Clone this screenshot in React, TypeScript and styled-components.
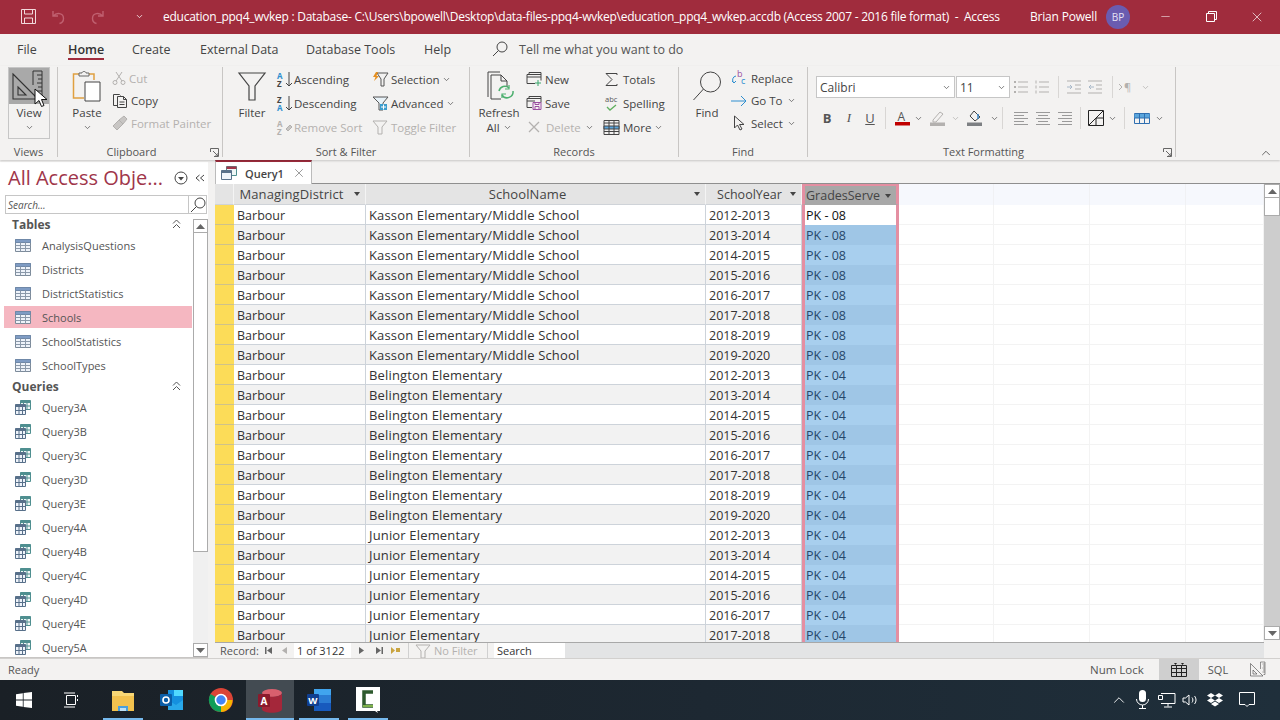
import React from "react";
import styled, { createGlobalStyle } from "styled-components";
import { ChevronDown, Minus, X, ChevronUp } from "lucide-react";

const FONT = `"Open Sans", "Noto Sans", sans-serif`;
const RED = "#a02c3d";

const GlobalStyle = createGlobalStyle`
  html, body { margin: 0; padding: 0; background: #f3f2f1; }
  * { box-sizing: border-box; }
  body { font-family: ${FONT}; }
`;

const Page = styled.div`
  width: 1280px;
  height: 720px;
  display: flex;
  flex-direction: column;
  overflow: hidden;
  background: #f3f2f1;
  color: #444;
`;

/* title bar */
const TitleBar = styled.div`
  height: 34px;
  flex-shrink: 0;
  background: ${RED};
  color: #fff;
  display: flex;
  align-items: center;
  font-size: 12px;
  padding: 0 0 1px 20px;
`;
const QuickAccess = styled.div`
  width: 143px;
  flex-shrink: 0;
  display: flex;
  align-items: center;
`;
const QuickSlot = styled.span<{ $w: number }>`
  width: ${(p) => p.$w}px;
  display: flex;
  align-items: center;
`;
const DocTitle = styled.div`
  width: 867px;
  flex-shrink: 0;
  white-space: pre;
  letter-spacing: -0.26px;
`;
const UserName = styled.div`
  width: 76px;
  flex-shrink: 0;
  white-space: nowrap;
  letter-spacing: -0.2px;
`;
const Avatar = styled.div`
  width: 24px;
  height: 24px;
  flex-shrink: 0;
  border-radius: 50%;
  background: #6a5cb0;
  color: #e6e2f5;
  font-size: 10px;
  display: flex;
  align-items: center;
  justify-content: center;
`;
const WindowButtons = styled.div`
  margin-left: 12px;
  display: flex;
`;
const WindowButton = styled.div`
  width: 46px;
  height: 33px;
  display: flex;
  align-items: center;
  justify-content: center;
`;

/* ribbon tabs */
const TabRow = styled.div`
  height: 32px;
  flex-shrink: 0;
  display: flex;
  align-items: flex-start;
  padding-left: 17px;
  font-size: 12.5px;
`;
const RibbonTab = styled.div<{ $w: number; $active?: boolean }>`
  width: ${(p) => p.$w}px;
  white-space: nowrap;
  color: ${(p) => (p.$active ? "#333" : "#444")};
  font-weight: ${(p) => (p.$active ? 600 : 400)};
  span {
    position: relative;
    display: inline-block;
    line-height: 31px;
  }
  span::after {
    content: "";
    display: ${(p) => (p.$active ? "block" : "none")};
    position: absolute;
    left: 0;
    right: 0;
    bottom: 5px;
    height: 2px;
    background: ${RED};
  }
`;
const TellMe = styled.div`
  height: 30px;
  display: flex;
  align-items: center;
  gap: 11px;
  color: #555;
`;

/* ribbon */
const Ribbon = styled.div`
  height: 94px;
  flex-shrink: 0;
  display: flex;
  position: relative;
  box-shadow: 0 1px 2px rgba(0, 0, 0, 0.18);
  z-index: 2;
  font-size: 11.5px;
`;
const Group = styled.div<{ $w: number }>`
  width: ${(p) => p.$w}px;
  height: 90px;
  flex-shrink: 0;
  margin-top: 1px;
  border-right: 1px solid #c8c6c4;
  display: flex;
  flex-direction: column;
  position: relative;
`;
const GroupBody = styled.div<{ $pl?: number }>`
  height: 78px;
  flex-shrink: 0;
  display: flex;
  padding-left: ${(p) => p.$pl ?? 0}px;
`;
const GroupLabel = styled.div<{ $pr?: number }>`
  text-align: center;
  font-size: 11px;
  line-height: 14px;
  color: #555;
  padding-right: ${(p) => p.$pr ?? 0}px;
`;
const Launcher = styled.span`
  position: absolute;
  right: 3px;
  bottom: 0;
  display: flex;
`;
const BigButton = styled.div<{ $w: number; $ml?: number }>`
  width: ${(p) => p.$w}px;
  margin-left: ${(p) => p.$ml ?? 0}px;
  display: flex;
  flex-direction: column;
  align-items: center;
  line-height: 15px;
  text-align: center;
  color: #444;
  flex-shrink: 0;
`;
const BigIcon = styled.div`
  height: 32px;
  margin-top: 3px;
  margin-bottom: 3px;
  display: flex;
  align-items: center;
  justify-content: center;
`;
const Chev = styled.span`
  height: 15px;
  display: inline-flex;
  align-items: center;
  justify-content: center;
  vertical-align: top;
`;
const ViewFrame = styled.div`
  width: 42px;
  height: 72px;
  margin-left: 8px;
  border: 1px solid #c6c6c6;
  display: flex;
  flex-direction: column;
  align-items: center;
  position: relative;
  line-height: 15px;
`;
const ViewHover = styled.div`
  width: 100%;
  height: 36px;
  background: #a9a9a9;
  display: flex;
  align-items: center;
  justify-content: center;
  margin-bottom: 1px;
`;
const Cursor = styled.span`
  position: absolute;
  left: 25px;
  top: 20px;
  display: flex;
`;
const Stack = styled.div<{ $w: number; $ml?: number; $h?: number }>`
  width: ${(p) => p.$w}px;
  margin-left: ${(p) => p.$ml ?? 0}px;
  display: grid;
  grid-auto-rows: ${(p) => p.$h ?? 24}px;
  align-content: start;
  flex-shrink: 0;
`;
const SmallRow = styled.div<{ $off?: boolean; $gap?: number }>`
  display: flex;
  align-items: center;
  gap: ${(p) => p.$gap ?? 3}px;
  color: ${(p) => (p.$off ? "#b3b1af" : "#444")};
  white-space: nowrap;
`;
const IconSlot = styled.span<{ $w: number }>`
  width: ${(p) => p.$w}px;
  display: flex;
  justify-content: center;
  flex-shrink: 0;
`;
const FormatBody = styled.div`
  height: 78px;
  flex-shrink: 0;
  padding: 9px 0 0 8px;
  display: flex;
  flex-direction: column;
  gap: 9px;
`;
const FormatRow = styled.div`
  height: 22px;
  display: flex;
  align-items: center;
`;
const Combo = styled.div<{ $w: number }>`
  width: ${(p) => p.$w}px;
  height: 22px;
  background: #fff;
  border: 1px solid #c6c6c6;
  margin-right: 1px;
  padding: 0 3px;
  display: flex;
  align-items: center;
  justify-content: space-between;
  font-size: 12px;
  color: #444;
`;
const Sep = styled.span<{ $ml: number; $mr: number }>`
  width: 1px;
  height: 22px;
  background: #d8d6d4;
  margin: 0 ${(p) => p.$mr}px 0 ${(p) => p.$ml}px;
`;
const FormatGlyph = styled.span<{ $w: number; $b?: boolean; $i?: boolean; $u?: boolean }>`
  width: ${(p) => p.$w}px;
  display: flex;
  align-items: center;
  justify-content: center;
  font-size: 13px;
  color: #555;
  font-family: ${(p) => (p.$i ? `"Liberation Serif", serif` : FONT)};
  font-weight: ${(p) => (p.$b ? 700 : 400)};
  font-style: ${(p) => (p.$i ? "italic" : "normal")};
  text-decoration: ${(p) => (p.$u ? "underline" : "none")};
`;
const Collapse = styled.span`
  position: absolute;
  right: 7px;
  bottom: 0;
  display: flex;
`;

/* workspace */
const Workspace = styled.div`
  flex: 1;
  min-height: 0;
  display: flex;
`;
const Nav = styled.div`
  width: 208px;
  margin-top: 2px;
  display: flex;
  flex-direction: column;
  background: #fff;
  flex-shrink: 0;
  border-bottom: 1px solid #c8c6c4;
`;
const NavHead = styled.div`
  height: 33px;
  flex-shrink: 0;
  display: flex;
  align-items: center;
  padding: 0 0 2px 8px;
  font-size: 20px;
  white-space: nowrap;
`;
const NavTitle = styled.div`
  width: 166px;
  color: #a0364a;
`;
const NavTools = styled.div`
  display: flex;
  align-items: center;
  gap: 7px;
`;
const NavSearch = styled.div`
  height: 19px;
  flex-shrink: 0;
  margin: 0 1px 0 5px;
  border: 1px solid #c6c6c6;
  display: flex;
  align-items: center;
  justify-content: space-between;
  font-size: 10px;
  font-style: italic;
  color: #555;
  padding-left: 2px;
`;
const SearchEnd = styled.span`
  width: 18px;
  height: 17px;
  border-left: 1px solid #c6c6c6;
  display: flex;
  align-items: center;
  justify-content: center;
`;
const NavBody = styled.div`
  flex: 1;
  min-height: 0;
  display: flex;
`;
const NavList = styled.div`
  flex: 1;
  min-width: 0;
  overflow: hidden;
  padding: 0 1px 0 4px;
`;
const NavSection = styled.div`
  display: flex;
  flex-direction: column;
  gap: 2px;
`;
const NavGroup = styled.div`
  height: 20px;
  margin-bottom: -2px;
  flex-shrink: 0;
  display: flex;
  align-items: center;
  justify-content: space-between;
  font-weight: 700;
  font-size: 12px;
  color: #555;
  padding: 0 11px 0 8px;
`;
const NavItem = styled.div<{ $selected?: boolean }>`
  height: 22px;
  flex-shrink: 0;
  display: flex;
  align-items: center;
  gap: 11px;
  padding-left: 11px;
  font-size: 11px;
  color: #555;
  background: ${(p) => (p.$selected ? "#f5b7c1" : "transparent")};
`;
const VScroll = styled.div<{ $w: number; $mt?: number }>`
  width: ${(p) => p.$w}px;
  margin-top: ${(p) => p.$mt ?? 0}px;
  flex-shrink: 0;
  display: flex;
  flex-direction: column;
  background: #f0f0f0;
`;
const ScrollBtn = styled.div`
  height: 14px;
  background: #fff;
  border: 1px solid #ababab;
  display: flex;
  align-items: center;
  justify-content: center;
  flex-shrink: 0;
`;
const ScrollThumb = styled.div<{ $h: number }>`
  height: ${(p) => p.$h}px;
  background: #fff;
  border: 1px solid #ababab;
  border-top: 0;
  flex-shrink: 0;
`;
const ScrollGap = styled.div<{ $dark?: boolean }>`
  flex: 1;
  background: ${(p) => (p.$dark ? "#cdcdcd" : "transparent")};
`;
const Doc = styled.div`
  flex: 1;
  min-width: 0;
  margin-left: 7px;
  display: flex;
  flex-direction: column;
`;
const DocTabs = styled.div`
  height: 24px;
  flex-shrink: 0;
  border-bottom: 1px solid #8f8f8f;
  display: flex;
`;
const DocTab = styled.div`
  width: 97px;
  height: 24px;
  background: #fff;
  border-top: 2px solid ${RED};
  border-left: 1px solid #bbb;
  border-right: 1px solid #bbb;
  display: flex;
  align-items: center;
  font-size: 11px;
  font-weight: 600;
  color: #444;
  padding-left: 5px;
  gap: 8px;
`;
const GridWrap = styled.div`
  flex: 1;
  min-height: 0;
  display: flex;
  background: #fff;
`;
const GridMain = styled.div`
  flex: 1;
  min-width: 0;
  display: flex;
  flex-direction: column;
`;
const Sheet = styled.div`
  flex: 1;
  min-height: 0;
  overflow: hidden;
`;
const COLUMNS = "19px 132px 340px 96px 97px 95px 96px 96px 78px";
const HeadRow = styled.div`
  height: 21px;
  display: grid;
  grid-template-columns: ${COLUMNS};
`;
const HeadCell = styled.div<{ $pr?: number; $wide?: boolean }>`
  display: flex;
  align-items: center;
  justify-content: center;
  position: relative;
  font-size: ${(p) => (p.$wide ? 13 : 12.5)}px;
  letter-spacing: ${(p) => (p.$wide ? 0.1 : 0)}px;
  color: #444;
  background: #e4e4e4;
  border-right: 1px solid #f4f4f4;
  border-bottom: 1px solid #cfd3d8;
  padding-right: ${(p) => p.$pr ?? 0}px;
  white-space: nowrap;
  overflow: hidden;
`;
const PickedHead = styled.div`
  display: flex;
  align-items: center;
  position: relative;
  font-size: 12.5px;
  color: #444;
  background: #a8a8a8;
  border: 3px solid #e48fa2;
  border-top-width: 2px;
  border-bottom: 1px solid #a8a8a8;
  padding-left: 1px;
  white-space: nowrap;
  overflow: hidden;
`;
const HeadArrow = styled.span`
  position: absolute;
  right: 5px;
  top: 8px;
  width: 0;
  height: 0;
  border-left: 3px solid transparent;
  border-right: 3px solid transparent;
  border-top: 4px solid #444;
`;
const GhostHead = styled.div`
  background: #f6f8fd;
  border-right: 1px solid #f0f1f4;
`;
const Row = styled.div`
  height: 20px;
  display: grid;
  grid-template-columns: ${COLUMNS};
`;
const RowMark = styled.div`
  background: #fcdc58;
  border-bottom: 1px solid #cfc28a;
`;
const Cell = styled.div<{ $alt: boolean; $wide?: boolean }>`
  font-size: ${(p) => (p.$wide ? 13 : 12.5)}px;
  letter-spacing: ${(p) => (p.$wide ? 0.16 : 0)}px;
  line-height: 19px;
  padding-top: 1px;
  color: #333;
  padding-left: 3px;
  background: ${(p) => (p.$alt ? "#f2f2f2" : "#fff")};
  border-right: 1px solid #cdd3da;
  border-bottom: 1px solid #cdd3da;
  white-space: nowrap;
  overflow: hidden;
`;
const PickCell = styled.div<{ $tone: "white" | "dark" | "light" }>`
  font-size: 12.5px;
  line-height: 19px;
  padding-top: 1px;
  padding-left: 1px;
  color: ${(p) => (p.$tone === "white" ? "#111" : "#26476a")};
  background: ${(p) =>
    p.$tone === "white" ? "#fff" : p.$tone === "dark" ? "#9fc6e6" : "#a8cfee"};
  border-left: 3px solid #e48fa2;
  border-right: 3px solid #e48fa2;
  white-space: nowrap;
  overflow: hidden;
`;
const GhostCell = styled.div`
  border-right: 1px solid #f3f3f3;
  border-bottom: 1px solid #f3f3f3;
`;
const RecordBar = styled.div`
  height: 16px;
  flex-shrink: 0;
  display: flex;
  align-items: center;
  border-top: 1px solid #a8a8a8;
  background: #f3f2f1;
  font-size: 11px;
  color: #555;
`;
const RecordLabel = styled.span`
  margin-left: 5px;
  width: 41px;
  flex-shrink: 0;
  line-height: 16px;
`;
const NavGlyph = styled.span<{ $w: number }>`
  width: ${(p) => p.$w}px;
  display: flex;
  justify-content: center;
  flex-shrink: 0;
`;
const RecordInput = styled.div<{ $w: number }>`
  width: ${(p) => p.$w}px;
  height: 15px;
  background: #fff;
  padding-left: 3px;
  line-height: 16px;
  color: #333;
  flex-shrink: 0;
`;
const BarSep = styled.span<{ $ml: number; $mr: number }>`
  width: 1px;
  height: 15px;
  background: #d0d0d0;
  margin: 0 ${(p) => p.$mr}px 0 ${(p) => p.$ml}px;
  flex-shrink: 0;
`;
const NoFilter = styled.span`
  display: flex;
  align-items: center;
  gap: 3px;
  color: #b3b1af;
  width: 72px;
  flex-shrink: 0;
  line-height: 16px;
`;
const HScroll = styled.div`
  flex: 1;
  height: 15px;
  background: #e3e4e5;
`;
const Corner = styled.div`
  height: 18px;
  background: #f3f2f1;
  flex-shrink: 0;
`;

/* status */
const StatusBar = styled.div`
  height: 22px;
  flex-shrink: 0;
  border-top: 1px solid #d2d0ce;
  display: flex;
  align-items: center;
  font-size: 11px;
  color: #555;
  padding-left: 8px;
`;
const StatusText = styled.span`
  flex: 1;
`;
const NumLock = styled.span`
  font-size: 11.5px;
  width: 69px;
`;
const ViewToggle = styled.span<{ $w: number; $on?: boolean }>`
  width: ${(p) => p.$w}px;
  height: 21px;
  display: flex;
  align-items: center;
  justify-content: center;
  background: ${(p) => (p.$on ? "#cfcfcf" : "transparent")};
`;

/* taskbar */
const Taskbar = styled.div`
  height: 40px;
  flex-shrink: 0;
  background: linear-gradient(90deg, #1a2026 0%, #1d2832 55%, #1f2f3b 100%);
  display: flex;
  align-items: center;
`;
const TaskIcon = styled.div<{ $w: number; $open?: boolean; $active?: boolean; $mr?: number }>`
  width: ${(p) => p.$w}px;
  margin-right: ${(p) => p.$mr ?? 0}px;
  height: 40px;
  display: flex;
  align-items: center;
  justify-content: center;
  position: relative;
  flex-shrink: 0;
  background: ${(p) => (p.$active ? "#434b52" : "transparent")};
  &::after {
    content: "";
    display: ${(p) => (p.$open ? "block" : "none")};
    position: absolute;
    left: 0;
    right: 0;
    bottom: 0;
    height: 2px;
    background: #76b9ed;
  }
`;
const Tray = styled.div`
  margin-left: auto;
  display: flex;
  align-items: center;
  color: #fff;
`;
const TraySlot = styled.span<{ $w: number }>`
  width: ${(p) => p.$w}px;
  display: flex;
  justify-content: center;
`;

type SvgProps = { w: number; h?: number; children: React.ReactNode; vb?: string };
const Svg = ({ w, h, children, vb }: SvgProps) => (
  <svg
    width={w}
    height={h ?? w}
    viewBox={vb ?? `0 0 ${w} ${h ?? w}`}
    fill="none"
    stroke="#555"
    strokeWidth="1"
    style={{ display: "block", flexShrink: 0, overflow: "visible" }}
  >
    {children}
  </svg>
);

const SmallChev = ({ color = "#555", size = 9 }: { color?: string; size?: number }) => (
  <Chev>
    <ChevronDown size={size} color={color} strokeWidth={2} />
  </Chev>
);

const SaveIcon = () => (
  <Svg w={17}>
    <path d="M1.5 1.5h14v14h-14z" stroke="#f2d9dc" />
    <path d="M4.5 1.5v4.5h8v-4.5M4.5 15.5v-5.5h8v5.5" stroke="#f2d9dc" />
  </Svg>
);
const UndoIcon = ({ flip }: { flip?: boolean }) => (
  <Svg w={16}>
    <g transform={flip ? "translate(16,0) scale(-1,1)" : undefined}>
      <path d="M3 2v5h5M3.5 7c3-4 10-3 10 2.5 0 3-2 4.5-4 5" stroke="#c06070" strokeWidth="1.4" />
    </g>
  </Svg>
);
const DesignIcon = ({ s = 34 }: { s?: number }) => (
  <Svg w={s} vb="0 0 34 34">
    <path d="M1 5L26 30H1Z M6 18L14 26H6Z" stroke="#333" strokeWidth="1.1" />
    <path d="M21 2h9v25h-3M21 2v14M25 6h5M26 10h4M25 14h5M26 18h4M25 22h5" stroke="#333" strokeWidth="1" />
  </Svg>
);
const PasteIcon = () => (
  <Svg w={30} h={32}>
    <path d="M8 4H1.5v24H12" stroke="#e0a040" strokeWidth="1.5" />
    <path d="M16 4h6v6" stroke="#e0a040" strokeWidth="1.5" />
    <path d="M7 6V3h3c0-2 4-2 4 0h3v3z" fill="#f3f2f1" stroke="#666" />
    <path d="M13 12h15v19H13z" fill="#fff" stroke="#444" />
  </Svg>
);
const CutIcon = () => (
  <Svg w={14}>
    <path d="M4 1l6 9M10 1L4 10" stroke="#b3b1af" />
    <circle cx="3" cy="11.5" r="2" stroke="#b3b1af" />
    <circle cx="11" cy="11.5" r="2" stroke="#b3b1af" />
  </Svg>
);
const CopyIcon = () => (
  <Svg w={16}>
    <path d="M5 12.5H1.5v-11h6l1 1" stroke="#444" />
    <path d="M5.5 3.5h6l3 3v8h-9zM11.5 3.5v3h3M7.5 9h5M7.5 11.5h5" stroke="#444" />
  </Svg>
);
const BrushIcon = () => (
  <Svg w={16}>
    <path d="M1 11l6-6 4 4-6 6zM7 5l5-4 3 3-4 5" fill="#c8c6c4" stroke="#b3b1af" />
  </Svg>
);
const FunnelBig = () => (
  <Svg w={28} h={30}>
    <path d="M1 2h26L17 15v14h-6V15z" stroke="#444" strokeWidth="1.2" />
  </Svg>
);
const SortIcon = ({ down, off }: { down?: boolean; off?: boolean }) => {
  const top = off ? "#b3b1af" : down ? "#444" : "#2f8fd0";
  const bottom = off ? "#b3b1af" : down ? "#2f8fd0" : "#444";
  return (
    <Svg w={17}>
      <text x="1" y="7.5" fontSize="8" fontWeight="700" fill={top} stroke="none" fontFamily={FONT}>
        {down ? "Z" : "A"}
      </text>
      <text x="1" y="15.5" fontSize="8" fontWeight="700" fill={bottom} stroke="none" fontFamily={FONT}>
        {down ? "A" : "Z"}
      </text>
      {off ? (
        <path d="M10 10l4-4 2 2-4 4z" fill="#c8c6c4" stroke="#b3b1af" />
      ) : (
        <path d="M13 1v14M10 12l3 3 3-3" stroke="#444" />
      )}
    </Svg>
  );
};
const SelectionIcon = () => (
  <Svg w={17}>
    <path d="M5 2h11l-4 6v7h-3V8z" stroke="#555" />
    <path d="M4 1L1 6h2.5L2 10l5-5H4.5L6 1z" fill="#e69020" stroke="none" />
  </Svg>
);
const AdvancedIcon = () => (
  <Svg w={17}>
    <path d="M1 2h15l-5 6v7H7V8z" stroke="#555" fill="#e8f2f8" />
    <path d="M8 9h7v6H8z" fill="#3c9ccc" stroke="none" />
    <path d="M9 12h5M11.5 9.5v5" stroke="#fff" />
  </Svg>
);
const ToggleIcon = () => (
  <Svg w={16}>
    <path d="M1 2h14l-5 6v7H6V8z" stroke="#b3b1af" />
  </Svg>
);
const RefreshIcon = () => (
  <Svg w={30} h={32}>
    <path d="M4 27V2M7 29V5h10l6 6v6M7 29h10M17 5v6h6" stroke="#444" />
    <path d="M4 2h12" stroke="#444" />
    <path d="M15 21a6 6 0 0 1 10-3M29 21a6 6 0 0 1-11 4" stroke="#4caf6e" strokeWidth="1.5" />
    <path d="M25 15v4h-4M18 28v-4h4" stroke="#4caf6e" strokeWidth="1.2" />
  </Svg>
);
const NewIcon = () => (
  <Svg w={16}>
    <path d="M3 1.5h12v8M1 3.5v9h8M3 1.5v2M1 3.5h14M1 6h14" stroke="#444" />
    <path d="M12 9v6M9 12h6" stroke="#3aa76d" />
  </Svg>
);
const SaveRecIcon = () => (
  <Svg w={16}>
    <path d="M3 1.5h12v6M1 3.5v9h5M3 1.5v2M1 3.5h14M1 6h8" stroke="#444" />
    <path d="M7 7.5h8v7H7zM9 7.5v2h4v-2M9 14.5v-3h4v3" stroke="#9a4fa0" />
  </Svg>
);
const DeleteIcon = () => (
  <Svg w={14}>
    <path d="M2 2l10 10M12 2L2 12" stroke="#b3b1af" strokeWidth="1.3" />
  </Svg>
);
const SumIcon = () => (
  <Svg w={15}>
    <path d="M13 3V1.5H2l6 6-6 6h11V12" stroke="#444" />
  </Svg>
);
const SpellIcon = () => (
  <Svg w={16}>
    <text x="1" y="7" fontSize="7.5" fill="#555" stroke="none" fontFamily={FONT}>
      abc
    </text>
    <path d="M3 12l3 3 6-5" stroke="#60b060" strokeWidth="1.3" />
  </Svg>
);
const MoreIcon = () => (
  <Svg w={17}>
    <path d="M1 1.5h15v14H1z" stroke="#444" />
    <path d="M1 7h15v3H1z" fill="#5aa5dc" stroke="#444" />
    <path d="M1 4h15M1 12.5h15M6 1.5v14M11 1.5v14" stroke="#444" />
  </Svg>
);
const FindIcon = () => (
  <Svg w={30}>
    <circle cx="18.5" cy="11" r="10" stroke="#444" />
    <path d="M11.5 18L1.5 29" stroke="#444" />
  </Svg>
);
const ReplaceIcon = () => (
  <Svg w={16}>
    <text x="6" y="7" fontSize="9" fill="#9a4fa0" stroke="none" fontFamily={FONT}>
      b
    </text>
    <text x="10" y="14" fontSize="9" fill="#2f8fd0" stroke="none" fontFamily={FONT}>
      c
    </text>
    <path d="M5 6a4 4 0 0 0-2 7M1 11l2 2 2-2" stroke="#2f8fd0" />
  </Svg>
);
const GoToIcon = () => (
  <Svg w={16}>
    <path d="M0 8h15M10 3l5 5-5 5" stroke="#2f8fd0" />
  </Svg>
);
const SelectIcon = () => (
  <Svg w={13} h={16}>
    <path d="M1.5 1v12l3-3 2.5 5 2-1-2.5-4.5H11z" stroke="#444" />
  </Svg>
);
const LauncherIcon = () => (
  <Svg w={9}>
    <path d="M0.5 4V0.5H8.5V8.5H4M3 3l5 5M8 5v3H5" stroke="#666" />
  </Svg>
);
const BulletsIcon = ({ num }: { num?: boolean }) => (
  <Svg w={16}>
    <path d="M5 3h10M5 8h10M5 13h10" stroke="#b3b1af" />
    {!num && <path d="M1 2h2v2H1zM1 7h2v2H1zM1 12h2v2H1z" fill="#b3b1af" stroke="none" />}
    {num && <path d="M2 1.5v3M2 6.5v3M2 11.5v3" stroke="#b3b1af" />}
  </Svg>
);
const IndentIcon = ({ back }: { back?: boolean }) => (
  <Svg w={16}>
    <path d="M1 2h14M9 6h6M9 10h6M1 14h14" stroke="#b3b1af" />
    <path d={back ? "M7 8H2M4 6L2 8l2 2" : "M1 8h5M4 6l2 2-2 2"} stroke="#a8b8c8" />
  </Svg>
);
const ParaIcon = () => (
  <Svg w={16}>
    <path d="M1 5l3 3-3 3" stroke="#b3b1af" />
    <text x="6" y="12" fontSize="11" fill="#b3b1af" stroke="none" fontFamily={FONT}>
      ¶
    </text>
  </Svg>
);
const FontColorIcon = () => (
  <Svg w={17}>
    <text x="3.5" y="11" fontSize="12" fill="#555" stroke="none" fontFamily={FONT}>
      A
    </text>
    <path d="M1 12h15v3.5H1z" fill="#c00000" stroke="none" />
  </Svg>
);
const HighlightIcon = () => (
  <Svg w={17}>
    <path d="M4 10l7-8 3 2-7 8H4z" stroke="#b3b1af" />
    <path d="M1 12.5h15V16H1z" fill="#b3b1af" stroke="none" />
  </Svg>
);
const FillIcon = () => (
  <Svg w={17}>
    <path d="M8 1l6 6-5 4-5-5z" stroke="#444" />
    <path d="M12 4v5" stroke="#2f7fc0" strokeWidth="1.4" />
    <path d="M1 12.5h15V16H1z" fill="#7d8083" stroke="none" />
  </Svg>
);
const AlignIcon = ({ kind }: { kind: "l" | "c" | "r" }) => {
  const short =
    kind === "l" ? "M1 5.5h10M1 11.5h10" : kind === "c" ? "M3 5.5h10M3 11.5h10" : "M5 5.5h10M5 11.5h10";
  return (
    <Svg w={16}>
      <path d={`M1 2.5h14M1 8.5h14M1 14.5h14 ${short}`} stroke="#9a9a9a" />
    </Svg>
  );
};
const GridlineIcon = () => (
  <Svg w={16}>
    <path d="M.5.5h15v15H.5zM15 1L1 15M8 8v7M8 8h7" stroke="#222" />
  </Svg>
);
const ColorTable = () => (
  <Svg w={16} h={11}>
    <path d="M.5.5h15v10H.5z" stroke="#2f6fb0" />
    <path d="M.5 1h15v4H.5z" fill="#5aa5dc" stroke="none" />
    <path d="M.5 5h15M5.5.5v10M10.5.5v10" stroke="#2f6fb0" />
  </Svg>
);
const TableIcon = () => (
  <Svg w={16} h={13}>
    <path d="M.5.5h15v12H.5z" stroke="#7d8b9a" fill="#eef3fa" />
    <path d="M.5.5h15v3H.5z" fill="#7f9cc4" stroke="#6f88a8" />
    <path d="M.5 6.500h15M.5 9.500h15M5.500 3.500v9M10.500 3.500v9" stroke="#8b99aa" />
  </Svg>
);
const QueryIcon = () => (
  <Svg w={16} h={15}>
    <path d="M5.5.5h10v9h-10z" fill="#eef6f6" stroke="#4f8f90" />
    <path d="M5.5.5h10v2.500h-10z" fill="#4f8f90" stroke="none" />
    <path d="M8.500 3v7M12 3v7M5.500 6h10" stroke="#4f8f90" />
    <path d="M.5 4.500h10v10H.5z" fill="#eef3fa" stroke="#58708a" />
    <path d="M.5 4.500h10V7H.5z" fill="#58708a" stroke="none" />
    <path d="M.5 10.500h10M4 7v7M7.500 7v7" stroke="#58708a" />
  </Svg>
);
const MagIcon = () => (
  <Svg w={16}>
    <circle cx="10" cy="6" r="5" stroke="#444" />
    <path d="M6.500 9.500L1 15" stroke="#444" />
  </Svg>
);
const Tri = ({ up, color = "#666" }: { up?: boolean; color?: string }) => (
  <Svg w={9} h={5}>
    <path d={up ? "M0 5L4.500 0 9 5z" : "M0 0L4.500 5 9 0z"} fill={color} stroke="none" />
  </Svg>
);
const DoubleUp = () => (
  <Svg w={9} h={10}>
    <path d="M1 4.500L4.500 1 8 4.500M1 9L4.500 5.500 8 9" stroke="#555" />
  </Svg>
);
const CircleDown = () => (
  <Svg w={14}>
    <circle cx="7" cy="7" r="6" stroke="#444" />
    <path d="M4 6h6L7 9.500z" fill="#444" stroke="none" />
  </Svg>
);
const DoubleLeft = () => (
  <Svg w={10}>
    <path d="M4.500 2L1 5l3.500 3M9 2L5.500 5 9 8" stroke="#444" />
  </Svg>
);
const Mouse = () => (
  <Svg w={14} h={21}>
    <path d="M1 1v15l4-3.500 2.500 6 2.500-1-2.500-6H13z" fill="#fff" stroke="#111" />
  </Svg>
);
const RecNav = ({ d, color = "#666" }: { d: string; color?: string }) => (
  <Svg w={9}>
    <path d={d} fill={color} stroke="none" />
  </Svg>
);
const WinLogo = () => (
  <Svg w={16}>
    <path d="M0 2.200L6.800 1.200V7.600H0zM7.600 1.100L16 0V7.600H7.600zM0 8.400H6.800V14.800L0 13.800zM7.600 8.400H16V16L7.600 14.900z" fill="#fff" stroke="none" />
  </Svg>
);
const TaskView = () => (
  <Svg w={16}>
    <path d="M3.500 3.500h9v9h-9zM1 1h11M1 15h11M14.500 3v2M14.500 7v2" stroke="#fff" />
  </Svg>
);
const Explorer = () => (
  <Svg w={22} h={21}>
    <path d="M0 1h10l2 2h10v18H0z" fill="#f8d775" stroke="none" />
    <path d="M0 6h22v15H0z" fill="#f2c14e" stroke="none" />
    <path d="M6 21v-5h10v5z" fill="#4a9fdc" stroke="none" />
    <path d="M8 21v-3h6v3z" fill="#bfe0f5" stroke="none" />
  </Svg>
);
const Outlook = () => (
  <Svg w={24} h={24}>
    <path d="M8 2h15v20H8z" fill="#1490df" stroke="none" />
    <path d="M8 12l8 5 7-5v10H8z" fill="#28a8ea" stroke="none" />
    <path d="M14 2h9v6h-9z" fill="#50d9ff" stroke="none" />
    <rect x="0" y="6" width="12" height="12" rx="1" fill="#0a5ea8" stroke="none" />
    <circle cx="6" cy="12" r="3" stroke="#fff" strokeWidth="1.6" />
  </Svg>
);
const Chrome = () => (
  <Svg w={24}>
    <circle cx="12" cy="12" r="12" fill="#db4437" stroke="none" />
    <path d="M12 12L1.500 6A12 12 0 0 0 12 24z" fill="#0f9d58" stroke="none" />
    <path d="M12 12h11.500A12 12 0 0 1 12 24z" fill="#f4b400" stroke="none" />
    <circle cx="12" cy="12" r="5.500" fill="#4285f4" stroke="#fff" strokeWidth="1.6" />
  </Svg>
);
const AccessApp = () => (
  <Svg w={24} h={25}>
    <ellipse cx="14" cy="5" rx="10" ry="4" fill="#d8606e" stroke="none" />
    <path d="M4 5v16c0 5 20 5 20 0V5c0 5-20 5-20 0z" fill="#a4273a" stroke="none" />
    <rect x="0" y="6" width="12" height="13" rx="1" fill="#8b1a2c" stroke="none" />
    <text x="2.400" y="16.500" fontSize="10" fontWeight="700" fill="#fff" stroke="none" fontFamily={FONT}>
      A
    </text>
  </Svg>
);
const WordApp = () => (
  <Svg w={24}>
    <path d="M7 1h17v22H7z" fill="#2b7cd3" stroke="none" />
    <path d="M7 1h17v6H7z" fill="#41a5ee" stroke="none" />
    <path d="M7 15h17v8H7z" fill="#185abd" stroke="none" />
    <rect x="0" y="6" width="12" height="12" rx="1" fill="#103f91" stroke="none" />
    <text x="1.200" y="15.500" fontSize="9.500" fontWeight="700" fill="#fff" stroke="none" fontFamily={FONT}>
      W
    </text>
  </Svg>
);
const CamtasiaApp = () => (
  <Svg w={24} h={26}>
    <path d="M0 0h24v24h-3l1 2-3-2H0z" fill="#fff" stroke="none" />
    <path d="M17 5H8v14h9" stroke="#2e5a2e" strokeWidth="3.500" />
    <path d="M7 19h10" stroke="#7fb24a" strokeWidth="2" />
  </Svg>
);
const TrayMic = () => (
  <Svg w={14} h={20}>
    <rect x="4" y="0" width="7" height="12" rx="3.500" fill="#fff" stroke="none" />
    <path d="M1.500 9a6 6 0 0 0 12 0M7.500 15v3M4 18.500h7" stroke="#fff" />
  </Svg>
);
const TrayNet = () => (
  <Svg w={18} h={15}>
    <path d="M3 .5h14v10H3M10 10.500v3M6 14h8M.5 2.500h4v4h-4z" stroke="#fff" />
  </Svg>
);
const TrayVolume = () => (
  <Svg w={16} h={14}>
    <path d="M1 5v4h2.500L7 12V2L3.500 5zM10 4.500c1.200 1.500 1.200 3.500 0 5M12.500 3c2 2.500 2 5.500 0 8" stroke="#fff" />
  </Svg>
);
const Dropbox = () => (
  <Svg w={16} h={14}>
    <path d="M4 0l4 2.500-4 2.500-4-2.500zM12 0l4 2.500-4 2.500-4-2.500zM4 5l4 2.500-4 2.500-4-2.500zM12 5l4 2.500-4 2.500-4-2.500zM4 11l4-2.500 4 2.500-4 2.500z" fill="#fff" stroke="none" />
  </Svg>
);
const Bubble = () => (
  <Svg w={16} h={16}>
    <path d="M.5.5h15v12H10l-2 2-2-2H.5z" stroke="#fff" />
  </Svg>
);
const DocTabIcon = () => (
  <Svg w={16} h={15}>
    <path d="M5.500.5h10v9h-10z" fill="#eef6f6" stroke="#4f8f90" />
    <path d="M5.500.5h10v2.500h-10z" fill="#a0364a" stroke="none" />
    <path d="M.5 4.500h10v9H.5z" fill="#eef3fa" stroke="#58708a" />
    <path d="M.5 4.500h10V7H.5z" fill="#58708a" stroke="none" />
  </Svg>
);
const SheetIcon = () => (
  <Svg w={16} h={15}>
    <path d="M.5 3.500h15v11H.5zM.5 6.500h15M.5 10.500h15M5.500 3.500v11M10.500 3.500v11" stroke="#222" />
    <path d="M3 1h3L4.500 3zM10 1h3l-1.500 2z" fill="#222" stroke="none" />
  </Svg>
);

const tables = ["AnalysisQuestions", "Districts", "DistrictStatistics", "Schools", "SchoolStatistics", "SchoolTypes"];
const queries = ["Query3A", "Query3B", "Query3C", "Query3D", "Query3E", "Query4A", "Query4B", "Query4C", "Query4D", "Query4E", "Query5A"];
const years = ["2012-2013", "2013-2014", "2014-2015", "2015-2016", "2016-2017", "2017-2018", "2018-2019", "2019-2020"];

const rows = [
  ...years.map((y) => ({ school: "Kasson Elementary/Middle School", year: y, grades: "PK - 08" })),
  ...years.map((y) => ({ school: "Belington Elementary", year: y, grades: "PK - 04" })),
  ...years.slice(0, 6).map((y) => ({ school: "Junior Elementary", year: y, grades: "PK - 04" })),
];

export default function App() {
  return (
    <Page>
      <GlobalStyle />
      <TitleBar>
        <QuickAccess>
          <QuickSlot $w={30}><SaveIcon /></QuickSlot>
          <QuickSlot $w={40}><UndoIcon /></QuickSlot>
          <QuickSlot $w={45}><UndoIcon flip /></QuickSlot>
          <QuickSlot $w={20}><SmallChev color="#fff" /></QuickSlot>
        </QuickAccess>
        <DocTitle>education_ppq4_wvkep : Database- C:\Users\bpowell\Desktop\data-files-ppq4-wvkep\education_ppq4_wvkep.accdb (Access 2007 - 2016 file format)  -  Access</DocTitle>
        <UserName>Brian Powell</UserName>
        <Avatar>BP</Avatar>
        <WindowButtons>
          <WindowButton><Minus size={13} color="#fff" strokeWidth={1} /></WindowButton>
          <WindowButton>
            <Svg w={11}>
              <path d="M.5 2.500h8v8h-8zM2.500 2.500v-2h8v8h-2" stroke="#fff" />
            </Svg>
          </WindowButton>
          <WindowButton><X size={16} color="#fff" strokeWidth={1} /></WindowButton>
        </WindowButtons>
      </TitleBar>

      <TabRow>
        <RibbonTab $w={51}><span>File</span></RibbonTab>
        <RibbonTab $w={64} $active><span>Home</span></RibbonTab>
        <RibbonTab $w={68}><span>Create</span></RibbonTab>
        <RibbonTab $w={106}><span>External Data</span></RibbonTab>
        <RibbonTab $w={118}><span>Database Tools</span></RibbonTab>
        <RibbonTab $w={68}><span>Help</span></RibbonTab>
        <TellMe>
          <MagIcon />
          <span>Tell me what you want to do</span>
        </TellMe>
      </TabRow>

      <Ribbon>
        <Group $w={58}>
          <GroupBody>
            <ViewFrame>
              <ViewHover><DesignIcon /></ViewHover>
              <span>View</span>
              <SmallChev />
              <Cursor><Mouse /></Cursor>
            </ViewFrame>
          </GroupBody>
          <GroupLabel>Views</GroupLabel>
        </Group>

        <Group $w={165}>
          <GroupBody $pl={15}>
            <BigButton $w={28}>
              <BigIcon><PasteIcon /></BigIcon>
              <span>Paste</span>
              <SmallChev />
            </BigButton>
            <Stack $w={110} $ml={11} $h={22.5}>
              <SmallRow $off><IconSlot $w={14}><CutIcon /></IconSlot>Cut</SmallRow>
              <SmallRow><IconSlot $w={16}><CopyIcon /></IconSlot>Copy</SmallRow>
              <SmallRow $off><IconSlot $w={16}><BrushIcon /></IconSlot>Format Painter</SmallRow>
            </Stack>
          </GroupBody>
          <GroupLabel $pr={17}>Clipboard</GroupLabel>
          <Launcher><LauncherIcon /></Launcher>
        </Group>

        <Group $w={247}>
          <GroupBody $pl={14}>
            <BigButton $w={30}>
              <BigIcon><FunnelBig /></BigIcon>
              <span>Filter</span>
            </BigButton>
            <Stack $w={96} $ml={8}>
              <SmallRow $gap={1}><IconSlot $w={18}><SortIcon /></IconSlot>Ascending</SmallRow>
              <SmallRow $gap={1}><IconSlot $w={18}><SortIcon down /></IconSlot>Descending</SmallRow>
              <SmallRow $off $gap={1}><IconSlot $w={18}><SortIcon off /></IconSlot>Remove Sort</SmallRow>
            </Stack>
            <Stack $w={90}>
              <SmallRow $gap={2}><IconSlot $w={18}><SelectionIcon /></IconSlot>Selection <SmallChev /></SmallRow>
              <SmallRow $gap={2}><IconSlot $w={18}><AdvancedIcon /></IconSlot>Advanced <SmallChev /></SmallRow>
              <SmallRow $off $gap={2}><IconSlot $w={18}><ToggleIcon /></IconSlot>Toggle Filter</SmallRow>
            </Stack>
          </GroupBody>
          <GroupLabel>Sort &amp; Filter</GroupLabel>
        </Group>

        <Group $w={209}>
          <GroupBody $pl={9}>
            <BigButton $w={40}>
              <BigIcon><RefreshIcon /></BigIcon>
              <span>Refresh</span>
              <span>All <SmallChev /></span>
            </BigButton>
            <Stack $w={77} $ml={7}>
              <SmallRow><IconSlot $w={16}><NewIcon /></IconSlot>New</SmallRow>
              <SmallRow><IconSlot $w={16}><SaveRecIcon /></IconSlot>Save</SmallRow>
              <SmallRow $off $gap={4}><IconSlot $w={16}><DeleteIcon /></IconSlot>Delete<SmallChev /></SmallRow>
            </Stack>
            <Stack $w={70}>
              <SmallRow><IconSlot $w={17}><SumIcon /></IconSlot>Totals</SmallRow>
              <SmallRow><IconSlot $w={17}><SpellIcon /></IconSlot>Spelling</SmallRow>
              <SmallRow><IconSlot $w={17}><MoreIcon /></IconSlot>More <SmallChev /></SmallRow>
            </Stack>
          </GroupBody>
          <GroupLabel>Records</GroupLabel>
        </Group>

        <Group $w={129}>
          <GroupBody $pl={13}>
            <BigButton $w={30}>
              <BigIcon><FindIcon /></BigIcon>
              <span>Find</span>
            </BigButton>
            <Stack $w={80} $ml={9} $h={22.5}>
              <SmallRow $gap={4}><IconSlot $w={16}><ReplaceIcon /></IconSlot>Replace</SmallRow>
              <SmallRow $gap={4}><IconSlot $w={16}><GoToIcon /></IconSlot>Go To <SmallChev /></SmallRow>
              <SmallRow $gap={4}><IconSlot $w={16}><SelectIcon /></IconSlot>Select <SmallChev /></SmallRow>
            </Stack>
          </GroupBody>
          <GroupLabel>Find</GroupLabel>
        </Group>

        <Group $w={368}>
          <FormatBody>
            <FormatRow>
              <Combo $w={139}>Calibri <SmallChev /></Combo>
              <Combo $w={54}>11 <SmallChev /></Combo>
              <IconSlot $w={20}><BulletsIcon /></IconSlot>
              <IconSlot $w={22}><BulletsIcon num /></IconSlot>
              <Sep $ml={5} $mr={5} />
              <IconSlot $w={20}><IndentIcon /></IconSlot>
              <IconSlot $w={22}><IndentIcon back /></IconSlot>
              <Sep $ml={6} $mr={3} />
              <IconSlot $w={20}><ParaIcon /></IconSlot>
              <IconSlot $w={18}><SmallChev color="#b3b1af" /></IconSlot>
            </FormatRow>
            <FormatRow>
              <FormatGlyph $w={22} $b>B</FormatGlyph>
              <FormatGlyph $w={22} $i>I</FormatGlyph>
              <FormatGlyph $w={20} $u>U</FormatGlyph>
              <Sep $ml={5} $mr={7} />
              <IconSlot $w={18}><FontColorIcon /></IconSlot>
              <IconSlot $w={14}><SmallChev /></IconSlot>
              <IconSlot $w={24}><HighlightIcon /></IconSlot>
              <IconSlot $w={12}><SmallChev color="#b3b1af" /></IconSlot>
              <IconSlot $w={27}><FillIcon /></IconSlot>
              <IconSlot $w={12}><SmallChev /></IconSlot>
              <Sep $ml={2} $mr={7} />
              <IconSlot $w={22}><AlignIcon kind="l" /></IconSlot>
              <IconSlot $w={22}><AlignIcon kind="c" /></IconSlot>
              <IconSlot $w={22}><AlignIcon kind="r" /></IconSlot>
              <Sep $ml={4} $mr={6} />
              <IconSlot $w={18}><GridlineIcon /></IconSlot>
              <IconSlot $w={14}><SmallChev /></IconSlot>
              <Sep $ml={5} $mr={8} />
              <IconSlot $w={18}><ColorTable /></IconSlot>
              <IconSlot $w={16}><SmallChev /></IconSlot>
            </FormatRow>
          </FormatBody>
          <GroupLabel $pr={16}>Text Formatting</GroupLabel>
          <Launcher><LauncherIcon /></Launcher>
        </Group>

        <Collapse><ChevronUp size={14} color="#555" strokeWidth={1.5} /></Collapse>
      </Ribbon>

      <Workspace>
        <Nav>
          <NavHead>
            <NavTitle>All Access Obje...</NavTitle>
            <NavTools>
              <CircleDown />
              <DoubleLeft />
            </NavTools>
          </NavHead>
          <NavSearch>
            Search...
            <SearchEnd><MagIcon /></SearchEnd>
          </NavSearch>
          <NavBody>
            <NavList>
              <NavSection>
                <NavGroup>Tables <DoubleUp /></NavGroup>
                {tables.map((t) => (
                  <NavItem key={t} $selected={t === "Schools"}>
                    <TableIcon />
                    {t}
                  </NavItem>
                ))}
              </NavSection>
              <NavSection>
                <NavGroup>Queries <DoubleUp /></NavGroup>
                {queries.map((q) => (
                  <NavItem key={q}>
                    <QueryIcon />
                    {q}
                  </NavItem>
                ))}
              </NavSection>
            </NavList>
            <VScroll $w={15} $mt={5}>
              <ScrollBtn><Tri up /></ScrollBtn>
              <ScrollThumb $h={319} />
              <ScrollGap />
              <ScrollBtn><Tri /></ScrollBtn>
            </VScroll>
          </NavBody>
        </Nav>

        <Doc>
          <DocTabs>
            <DocTab>
              <DocTabIcon />
              Query1
              <X size={14} color="#666" strokeWidth={1.1} />
            </DocTab>
          </DocTabs>
          <GridWrap>
            <GridMain>
              <Sheet>
                <HeadRow>
                  <HeadCell />
                  <HeadCell $wide $pr={16}>ManagingDistrict<HeadArrow /></HeadCell>
                  <HeadCell $wide $pr={16}>SchoolName<HeadArrow /></HeadCell>
                  <HeadCell $pr={8}>SchoolYear<HeadArrow /></HeadCell>
                  <PickedHead>GradesServe<HeadArrow /></PickedHead>
                  <GhostHead />
                  <GhostHead />
                  <GhostHead />
                  <GhostHead />
                </HeadRow>
                {rows.map((r, i) => (
                  <Row key={r.school + r.year}>
                    <RowMark />
                    <Cell $alt={i % 2 === 1}>Barbour</Cell>
                    <Cell $alt={i % 2 === 1} $wide>{r.school}</Cell>
                    <Cell $alt={i % 2 === 1}>{r.year}</Cell>
                    <PickCell $tone={i === 0 ? "white" : i % 2 === 1 ? "dark" : "light"}>{r.grades}</PickCell>
                    <GhostCell />
                    <GhostCell />
                    <GhostCell />
                    <GhostCell />
                  </Row>
                ))}
              </Sheet>
              <RecordBar>
                <RecordLabel>Record:</RecordLabel>
                <NavGlyph $w={14}><RecNav d="M1 1h1.500v7H1zM8 1v7L3 4.500z" /></NavGlyph>
                <NavGlyph $w={19}><RecNav d="M7 1v7L2 4.500z" color="#b3b1af" /></NavGlyph>
                <RecordInput $w={57}>1 of 3122</RecordInput>
                <NavGlyph $w={20}><RecNav d="M2 1v7l5-3.500z" /></NavGlyph>
                <NavGlyph $w={16}><RecNav d="M1 1v7l5-3.500zM6.500 1H8v7H6.500z" /></NavGlyph>
                <NavGlyph $w={16}><RecNav d="M0 1v7l4-3.500zM5 2h4v4H5z" color="#c9a440" /></NavGlyph>
                <BarSep $ml={5} $mr={6} />
                <NoFilter><ToggleIcon />No Filter</NoFilter>
                <BarSep $ml={0} $mr={6} />
                <RecordInput $w={71}>Search</RecordInput>
                <HScroll />
              </RecordBar>
            </GridMain>
            <VScroll $w={16}>
              <ScrollBtn><Tri up /></ScrollBtn>
              <ScrollThumb $h={18} />
              <ScrollGap $dark />
              <ScrollBtn><Tri /></ScrollBtn>
              <Corner />
            </VScroll>
          </GridWrap>
        </Doc>
      </Workspace>

      <StatusBar>
        <StatusText>Ready</StatusText>
        <NumLock>Num Lock</NumLock>
        <ViewToggle $w={40} $on><SheetIcon /></ViewToggle>
        <ViewToggle $w={38}>SQL</ViewToggle>
        <ViewToggle $w={43}><DesignIcon s={17} /></ViewToggle>
      </StatusBar>

      <Taskbar>
        <TaskIcon $w={47}><WinLogo /></TaskIcon>
        <TaskIcon $w={48}><TaskView /></TaskIcon>
        <TaskIcon $w={8} />
        <TaskIcon $w={40} $open><Explorer /></TaskIcon>
        <TaskIcon $w={58}><Outlook /></TaskIcon>
        <TaskIcon $w={40} $mr={5}><Chrome /></TaskIcon>
        <TaskIcon $w={48} $open $active $mr={5}><AccessApp /></TaskIcon>
        <TaskIcon $w={40} $open $mr={9}><WordApp /></TaskIcon>
        <TaskIcon $w={40} $open><CamtasiaApp /></TaskIcon>
        <Tray>
          <TraySlot $w={24}><ChevronUp size={18} strokeWidth={1.2} color="#fff" /></TraySlot>
          <TraySlot $w={22}><TrayMic /></TraySlot>
          <TraySlot $w={28}><TrayNet /></TraySlot>
          <TraySlot $w={18}><TrayVolume /></TraySlot>
          <TraySlot $w={32}><Dropbox /></TraySlot>
          <TraySlot $w={32}><Bubble /></TraySlot>
          <TraySlot $w={17} />
        </Tray>
      </Taskbar>
    </Page>
  );
}
